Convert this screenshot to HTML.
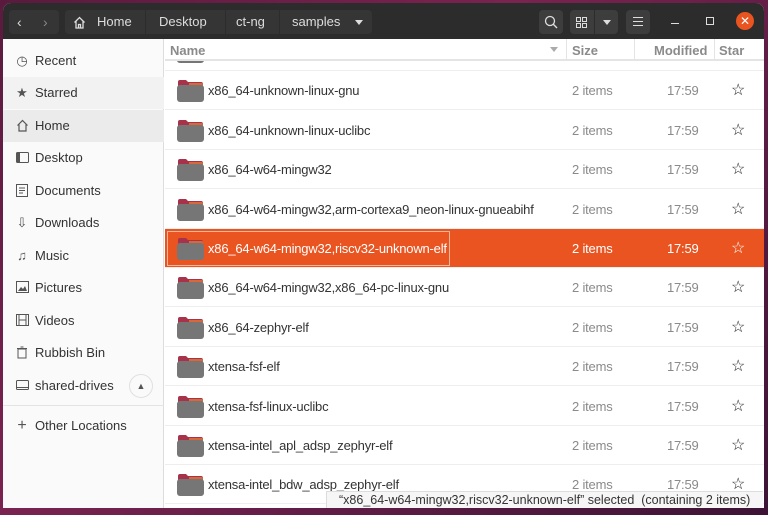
<!DOCTYPE html>
<html><head><meta charset="utf-8"><style>
*{margin:0;padding:0;box-sizing:border-box}
body{width:768px;height:515px;overflow:hidden;background:linear-gradient(135deg,#5a1a3e,#7a2350 40%,#3d1436);font-family:"Liberation Sans",sans-serif;font-size:13px;color:#3c3c3c;position:relative}
.win{position:absolute;left:3px;top:3px;width:761px;height:505px;background:#fff;border-radius:8px 8px 0 0;overflow:hidden}
.hb{position:absolute;left:0;top:0;width:761px;height:36px;background:#2c2c2c}
.btn{position:absolute;top:7px;height:24px;background:#3d3d3d;border-radius:4px;color:#ddd;font-size:14px;line-height:24px;text-align:center}
.side{position:absolute;left:0;top:36px;width:161px;height:469px;background:#fafafa;border-right:1px solid #ddd}
.si{position:absolute;left:0;width:161px;height:32px;line-height:32px;padding-left:32px;color:#333}
.si .ic{position:absolute;left:12px;top:9px;width:14px;height:14px;color:#555;font-size:13px;line-height:14px;text-align:center}
.main{position:absolute;left:162px;top:36px;width:599px;height:469px;background:#fff}
.hdr{position:absolute;left:0;top:0;width:599px;height:22px;border-bottom:2px solid #e4e4e4;color:#8a8a8a;font-weight:bold;font-size:13px;background:#fff;z-index:2}
.hdr span{position:absolute;top:4px}
.clip{position:absolute;left:0;top:22px;width:599px;height:447px;overflow:hidden}
.row{position:absolute;left:0;width:599px;height:39px;border-bottom:1px solid #eee;letter-spacing:-0.2px}
.row .f{position:absolute;left:11px;top:6px;width:28px;height:26px}
.row .n{position:absolute;left:43px;top:12px;color:#333}
.row .s{position:absolute;left:407px;top:12px;color:#8a8a8a}
.row .m{position:absolute;left:502px;top:12px;color:#8a8a8a}
.row .st{position:absolute;left:566px;top:9px;font-size:16px;color:#222}
.sel{background:#e95420}
.sel .n,.sel .s,.sel .m,.sel .st{color:#fff}
</style></head><body>
<div class="win">
<div class="hb">
 <div class="btn" style="left:6px;width:50px;background:#353535"><span style="position:absolute;left:8px">‹</span><span style="position:absolute;left:34px;color:#888">›</span></div>
 <div class="btn" style="left:62px;width:307px;background:#353535;font-size:13px;text-align:left">
  <svg style="position:absolute;left:8px;top:6px" width="13" height="13" viewBox="0 0 13 13"><path d="M1.5 6.5L6.5 1.5 11.5 6.5M3 5.5V12H10V5.5M5.5 12V8.5H7.5V12" fill="none" stroke="#ddd" stroke-width="1.3"/></svg>
  <span style="position:absolute;left:32px">Home</span>
  <span style="position:absolute;left:80px;top:0;width:1px;height:24px;background:#2c2c2c"></span>
  <span style="position:absolute;left:94px">Desktop</span>
  <span style="position:absolute;left:160px;top:0;width:1px;height:24px;background:#2c2c2c"></span>
  <span style="position:absolute;left:171px">ct-ng</span>
  <span style="position:absolute;left:214px;top:0;width:1px;height:24px;background:#2c2c2c"></span>
  <span style="position:absolute;left:227px">samples</span>
  <span style="position:absolute;left:290px;top:10px;border:4px solid transparent;border-top:5px solid #ddd"></span>
 </div>
 <div class="btn" style="left:536px;width:24px"><svg style="margin-top:5px" width="14" height="14" viewBox="0 0 14 14"><circle cx="6" cy="6" r="4.5" fill="none" stroke="#ddd" stroke-width="1.3"/><path d="M9.3 9.3L13 13" stroke="#ddd" stroke-width="1.4"/></svg></div>
 <div class="btn" style="left:567px;width:48px"><svg style="position:absolute;left:6px;top:7px" width="11" height="11" viewBox="0 0 11 11"><g fill="none" stroke="#ddd"><rect x=".5" y=".5" width="4" height="4"/><rect x="6.5" y=".5" width="4" height="4"/><rect x=".5" y="6.5" width="4" height="4"/><rect x="6.5" y="6.5" width="4" height="4"/></g></svg><span style="position:absolute;left:24px;top:0;width:1px;height:24px;background:#2c2c2c"></span><span style="position:absolute;left:33px;top:10px;border:4px solid transparent;border-top:5px solid #ddd"></span></div>
 <div class="btn" style="left:623px;width:24px"><svg style="margin-top:6px" width="12" height="11" viewBox="0 0 12 11"><path d="M1 1.5H11M1 5.5H11M1 9.5H11" stroke="#ddd"/></svg></div>
 <div style="position:absolute;left:668px;top:20px;width:8px;height:1px;background:#ddd"></div>
 <div style="position:absolute;left:703px;top:14px;width:8px;height:8px;border:1px solid #ddd"></div>
 <div style="position:absolute;left:733px;top:9px;width:18px;height:18px;border-radius:50%;background:#e95420;color:#fff;font-size:12px;line-height:18px;text-align:center">✕</div>
</div>
<div class="side">
 <div class="si" style="top:6px"><span class="ic">◷</span>Recent</div>
 <div class="si" style="top:38px;background:#f2f2f2"><span class="ic">★</span>Starred</div>
 <div class="si" style="top:71px;background:#ebebeb"><span class="ic"><svg width="13" height="13" viewBox="0 0 13 13"><path d="M1.5 6.5L6.5 1.5 11.5 6.5M3 5.5V12H10V5.5" fill="none" stroke="#555" stroke-width="1.2"/></svg></span>Home</div>
 <div class="si" style="top:103px"><span class="ic"><svg width="13" height="12"><rect x=".5" y="1.5" width="12" height="10" rx="1" fill="none" stroke="#555"/><rect x="1" y="2" width="3" height="9" fill="#555"/></svg></span>Desktop</div>
 <div class="si" style="top:136px"><span class="ic"><svg width="12" height="13"><rect x=".5" y=".5" width="11" height="12" fill="none" stroke="#555"/><path d="M3 4H9M3 6.5H9M3 9H7" stroke="#555"/></svg></span>Documents</div>
 <div class="si" style="top:168px"><span class="ic">⇩</span>Downloads</div>
 <div class="si" style="top:201px"><span class="ic">♫</span>Music</div>
 <div class="si" style="top:233px"><span class="ic"><svg width="13" height="12"><rect x=".5" y=".5" width="12" height="11" fill="none" stroke="#555"/><path d="M2 10L5 6 7 8 9 5 11 10Z" fill="#555"/></svg></span>Pictures</div>
 <div class="si" style="top:266px"><span class="ic"><svg width="13" height="12"><rect x=".5" y=".5" width="12" height="11" fill="none" stroke="#555"/><path d="M3 1V11M10 1V11M3 6H10" stroke="#555"/></svg></span>Videos</div>
 <div class="si" style="top:298px"><span class="ic"><svg width="12" height="13"><path d="M2 3H10V12H2ZM1 2.5H11M4.5 1H7.5" fill="none" stroke="#555"/></svg></span>Rubbish Bin</div>
 <div class="si" style="top:331px"><span class="ic"><svg width="13" height="12"><rect x=".5" y="1.5" width="12" height="9" rx="1" fill="none" stroke="#555"/><path d="M1 8.5H12" stroke="#555"/></svg></span>shared-drives
  <span style="position:absolute;left:126px;top:4px;width:24px;height:24px;border-radius:50%;border:1px solid #e0e0e0;background:#fafafa;font-size:9px;line-height:22px;text-align:center;color:#555">▲</span></div>
 <div style="position:absolute;left:0;top:366px;width:161px;height:1px;background:#e4e4e4"></div>
 <div class="si" style="top:371px"><span class="ic" style="font-size:16px">+</span>Other Locations</div>
</div>
<div class="main">
 <div class="hdr">
  <span style="left:5px">Name</span>
  <span style="left:385px;top:8px;border:4px solid transparent;border-top:5px solid #aaa"></span>
  <span style="left:401px;top:0;width:1px;height:22px;background:#e4e4e4"></span>
  <span style="left:407px">Size</span>
  <span style="left:469px;top:0;width:1px;height:22px;background:#e4e4e4"></span>
  <span style="left:489px">Modified</span>
  <span style="left:549px;top:0;width:1px;height:22px;background:#e4e4e4"></span>
  <span style="left:554px">Star</span>
 </div>
 <div class="clip" id="rows"></div>
 <div style="position:absolute;left:161px;top:452px;width:437px;height:18px;background:#f6f6f6;border:1px solid #ddd;border-right:none;border-bottom:none;font-size:12.5px;line-height:17px;padding-left:12px;color:#333;z-index:3">“x86_64-w64-mingw32,riscv32-unknown-elf” selected&nbsp; (containing 2 items)</div>
</div>
</div>
<script>
var names=["","x86_64-unknown-linux-gnu","x86_64-unknown-linux-uclibc","x86_64-w64-mingw32","x86_64-w64-mingw32,arm-cortexa9_neon-linux-gnueabihf","x86_64-w64-mingw32,riscv32-unknown-elf","x86_64-w64-mingw32,x86_64-pc-linux-gnu","x86_64-zephyr-elf","xtensa-fsf-elf","xtensa-fsf-linux-uclibc","xtensa-intel_apl_adsp_zephyr-elf","xtensa-intel_bdw_adsp_zephyr-elf"];
var h="";
var fold='<svg class="f" viewBox="0 0 28 26"><path d="M2 5Q2 3 4 3H10L12 5H25Q27 5 27 7V10H2Z" fill="#a8324a"/><path d="M13 6H26Q27 6 27 8V10H13Z" fill="#d9673a"/><rect x="1" y="8" width="27" height="17" rx="3" fill="#767676"/></svg>';
names.forEach(function(n,i){var top=-29+i*39.4;var sel=i==5;
h+='<div class="row'+(sel?' sel':'')+'" style="top:'+top+'px">'+fold+
(sel?'<div style="position:absolute;left:2px;top:2px;width:283px;height:35px;border:1px solid #f6b69c"></div>':'')+
(n?'<span class="n">'+n+'</span><span class="s">2 items</span><span class="m">17:59</span><span class="st">☆</span>':'')+'</div>';});
document.getElementById("rows").innerHTML=h;
</script>
</body></html>
